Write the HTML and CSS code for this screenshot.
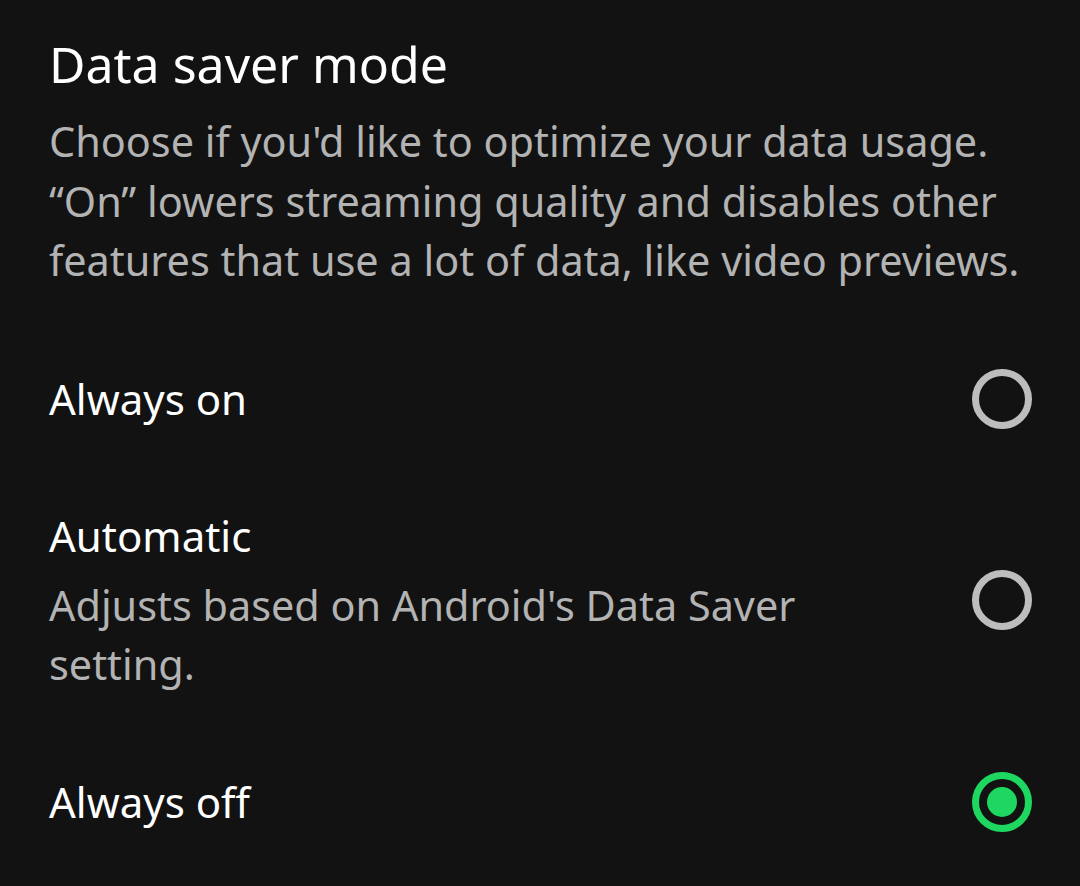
FILE: index.html
```html
<!DOCTYPE html>
<html lang="en">
<head>
    <meta charset="UTF-8">
    <title>Data saver mode</title>
    <link rel="stylesheet" href="styles.css">
</head>
<body>

<div class="page">
    <h1 class="title">Data saver mode</h1>
    <p class="intro">Choose if you'd like to optimize your data usage. “On” lowers streaming quality and disables other features that use a lot of data, like video previews.</p>

    <ul class="options">
        <li class="option">
            <div class="text">
                <div class="label">Always on</div>
            </div>
            <span class="radio"></span>
        </li>
        <li class="option">
            <div class="text">
                <div class="label">Automatic</div>
                <div class="desc">Adjusts based on Android's Data Saver setting.</div>
            </div>
            <span class="radio"></span>
        </li>
        <li class="option">
            <div class="text">
                <div class="label">Always off</div>
            </div>
            <span class="radio checked"></span>
        </li>
    </ul>
</div>

</body>
</html>
```

FILE: styles.css
```css
html, body {
    margin: 0;
    padding: 0;
    height: 100%;
    background: #121212;
}

body {
    font-family: "Noto Sans", sans-serif;
    color: #fff;
}

.page {
    padding: 34px 48px 0 49px;
}

.title {
    margin: 0;
    font-size: 50px;
    font-weight: 400;
    line-height: 60px;
}

.intro {
    margin: 18px -10px 0 0;
    font-size: 41.4px;
    line-height: 59.5px;
    color: #b3b3b3;
}

.options {
    list-style: none;
    margin: 78px 0 0 0;
    padding: 0;
}

.option {
    display: flex;
    align-items: center;
    justify-content: space-between;
    margin-bottom: 77px;
}

.text {
    width: 780px;
}

.label {
    font-size: 42px;
    line-height: 60px;
}

.desc {
    font-size: 41.4px;
    line-height: 59.5px;
    color: #b3b3b3;
    margin-top: 10px;
}

.radio {
    width: 46px;
    height: 46px;
    border: 7px solid #bdbdbd;
    border-radius: 50%;
    position: relative;
    flex: none;
}

.radio.checked {
    border-color: #1ed760;
}

.radio.checked:after {
    content: '';
    position: absolute;
    left: 8px;
    top: 8px;
    width: 30px;
    height: 30px;
    border-radius: 50%;
    background: #1ed760;
}
```
